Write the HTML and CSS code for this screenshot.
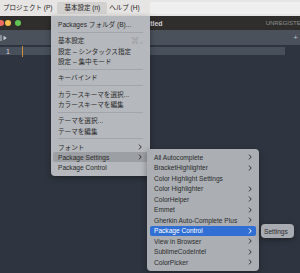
FILE: index.html
```html
<!DOCTYPE html>
<html lang="ja">
<head>
    <meta charset="UTF-8">
    <title>Sublime Text</title>
    <link rel="stylesheet" href="styles.css">
</head>
<body>
<div class="menubar">
    <span class="mb-item">プロジェクト (P)</span>
    <span class="mb-item active">基本設定 (n)</span>
    <span class="mb-item">ヘルプ (H)</span>
    <div class="mb-fill"></div>
</div>

<div class="window">
    <div class="titlebar">
        <div class="lights"><i class="red"></i><i class="yellow"></i><i class="green"></i></div>
        <div class="title">untitled</div>
        <div class="unreg">UNREGISTERED</div>
    </div>
    <div class="tabbar">
        <svg width="8" height="8" viewBox="0 0 8 8"><rect x="0.5" y="1" width="1" height="6" fill="#c9ced4"/><path d="M3.5 1.8 L6.8 4 L3.5 6.2 Z" fill="#c9ced4"/></svg>
        <span class="plus">+</span>
    </div>
    <div class="editor">
        <div class="line"><span class="ln">1</span><span class="cursor"></span></div>
    </div>
</div>

<div class="menu menu-main">
    <div class="item">Packages フォルダ (B)...</div>
    <div class="sep"></div>
    <div class="item">基本設定 <span class="key">⌘ ,</span></div>
    <div class="item">設定 – シンタックス指定</div>
    <div class="item">設定 – 集中モード</div>
    <div class="sep"></div>
    <div class="item">キーバインド</div>
    <div class="sep"></div>
    <div class="item">カラースキーマを選択...</div>
    <div class="item">カラースキーマを編集</div>
    <div class="sep"></div>
    <div class="item">テーマを選択...</div>
    <div class="item">テーマを編集</div>
    <div class="sep"></div>
    <div class="item">フォント <svg class="chev" width="4" height="6" viewBox="0 0 4 6"><path d="M1 0.6 L3.2 3 L1 5.4" fill="none" stroke="#333" stroke-width="1"/></svg></div>
    <div class="item open">Package Settings <svg class="chev" width="4" height="6" viewBox="0 0 4 6"><path d="M1 0.6 L3.2 3 L1 5.4" fill="none" stroke="#333" stroke-width="1"/></svg></div>
    <div class="item">Package Control</div>
</div>

<div class="menu menu-sub">
    <div class="item">All Autocomplete <svg class="chev" width="4" height="6" viewBox="0 0 4 6"><path d="M1 0.6 L3.2 3 L1 5.4" fill="none" stroke="#333" stroke-width="1"/></svg></div>
    <div class="item">BracketHighlighter <svg class="chev" width="4" height="6" viewBox="0 0 4 6"><path d="M1 0.6 L3.2 3 L1 5.4" fill="none" stroke="#333" stroke-width="1"/></svg></div>
    <div class="item">Color Highlight Settings</div>
    <div class="item">Color Highlighter <svg class="chev" width="4" height="6" viewBox="0 0 4 6"><path d="M1 0.6 L3.2 3 L1 5.4" fill="none" stroke="#333" stroke-width="1"/></svg></div>
    <div class="item">ColorHelper <svg class="chev" width="4" height="6" viewBox="0 0 4 6"><path d="M1 0.6 L3.2 3 L1 5.4" fill="none" stroke="#333" stroke-width="1"/></svg></div>
    <div class="item">Emmet <svg class="chev" width="4" height="6" viewBox="0 0 4 6"><path d="M1 0.6 L3.2 3 L1 5.4" fill="none" stroke="#333" stroke-width="1"/></svg></div>
    <div class="item">Gherkin Auto-Complete Plus <svg class="chev" width="4" height="6" viewBox="0 0 4 6"><path d="M1 0.6 L3.2 3 L1 5.4" fill="none" stroke="#333" stroke-width="1"/></svg></div>
    <div class="item selected">Package Control <svg class="chev" width="4" height="6" viewBox="0 0 4 6"><path d="M1 0.6 L3.2 3 L1 5.4" fill="none" stroke="#fff" stroke-width="1"/></svg></div>
    <div class="item">View in Browser <svg class="chev" width="4" height="6" viewBox="0 0 4 6"><path d="M1 0.6 L3.2 3 L1 5.4" fill="none" stroke="#333" stroke-width="1"/></svg></div>
    <div class="item">SublimeCodeIntel <svg class="chev" width="4" height="6" viewBox="0 0 4 6"><path d="M1 0.6 L3.2 3 L1 5.4" fill="none" stroke="#333" stroke-width="1"/></svg></div>
    <div class="item">ColorPicker <svg class="chev" width="4" height="6" viewBox="0 0 4 6"><path d="M1 0.6 L3.2 3 L1 5.4" fill="none" stroke="#333" stroke-width="1"/></svg></div>
</div>

<div class="menu menu-sub2">
    <div class="item">Settings</div>
</div>
</body>
</html>
```

FILE: styles.css
```css
* {
    box-sizing: border-box;
}

html, body {
    margin: 0;
    padding: 0;
}

body {
    position: relative;
    width: 300px;
    height: 273px;
    overflow: hidden;
    background: #2f3540;
    font-family: "Liberation Sans", "Noto Sans CJK JP", sans-serif;
}

.menubar {
    height: 16px;
    display: flex;
    align-items: center;
    padding-left: 3px;
    background: #e7e5e3;
    font-size: 6.5px;
    color: #222;
    white-space: nowrap;
}

.mb-item {
    line-height: 12px;
}

.mb-item.active {
    margin: 0 2px 0 5px;
    padding: 0 7px;
    background: #d3d1cf;
    border-radius: 2px;
}

.mb-fill {
    flex: 1;
    height: 12px;
    margin-left: 10px;
    background: #efefef;
}

.titlebar {
    height: 14px;
    display: grid;
    grid-template-columns: minmax(0, 1fr) auto minmax(0, 1fr);
    align-items: center;
    background: #302e2c;
    overflow: hidden;
    white-space: nowrap;
}

.lights {
    display: flex;
    align-items: center;
    margin-left: -2px;
}

.lights i {
    width: 6px;
    height: 6px;
    border-radius: 50%;
}

.red {
    background: #ed6a5e;
}

.yellow {
    margin-left: 1px;
    background: #f5bf4f;
}

.green {
    margin-left: 4px;
    background: #61c454;
}

.title {
    font-size: 7px;
    font-weight: bold;
    color: #cfcfcf;
}

.unreg {
    padding-left: 103px;
    font-size: 6px;
    color: #8e8e8e;
    overflow: hidden;
}

.tabbar {
    height: 15px;
    display: flex;
    align-items: center;
    justify-content: space-between;
    padding: 0 2px 0 0;
    background: #4a515b;
}

.tabbar svg {
    display: block;
}

.plus {
    font-size: 8px;
    color: #b9bec5;
}

.editor {
    padding-top: 2px;
}

.line {
    width: 285px;
    height: 8px;
    display: flex;
    align-items: center;
    background: #47505b;
}

.ln {
    margin-left: 6px;
    font-size: 7px;
    color: #d6d9dd;
}

.cursor {
    width: 1px;
    height: 11px;
    margin-left: 12px;
    background: #d08b3b;
}

.menu {
    position: absolute;
    font-size: 6.6px;
    color: #2a2a2a;
    white-space: nowrap;
    box-shadow: 0 2px 6px rgba(0, 0, 0, 0.35);
}

.menu .item {
    display: flex;
    align-items: center;
    justify-content: space-between;
    border-radius: 2px;
}

.chev {
    display: block;
}

.menu-main {
    left: 51px;
    top: 16px;
    width: 99px;
    padding: 3px 2px;
    background: #b5b8bc;
    border-radius: 0 0 4px 4px;
}

.menu-main .item {
    height: 10.3px;
    padding: 0 6px 0 5px;
}

.menu-main .item.open {
    background: #9c9fa4;
}

.key {
    color: #7d8186;
}

.sep {
    height: 6px;
    display: flex;
    align-items: center;
    padding: 0 5px;
}

.sep::after {
    content: "";
    flex: 1;
    height: 1px;
    background: #a2a5a9;
}

.menu-sub {
    left: 147px;
    top: 149px;
    width: 112px;
    padding: 3px;
    background: #abafb4;
    border-radius: 4px;
}

.menu-sub .item {
    height: 10.5px;
    padding: 0 4px 0 4px;
}

.menu-sub .item.selected {
    background: #316fd5;
    color: #fff;
}

.menu-sub2 {
    left: 261px;
    top: 224px;
    width: 33px;
    height: 14px;
    padding: 0 3px;
    display: flex;
    align-items: center;
    background: #a8acb2;
    border-radius: 4px;
}
```
